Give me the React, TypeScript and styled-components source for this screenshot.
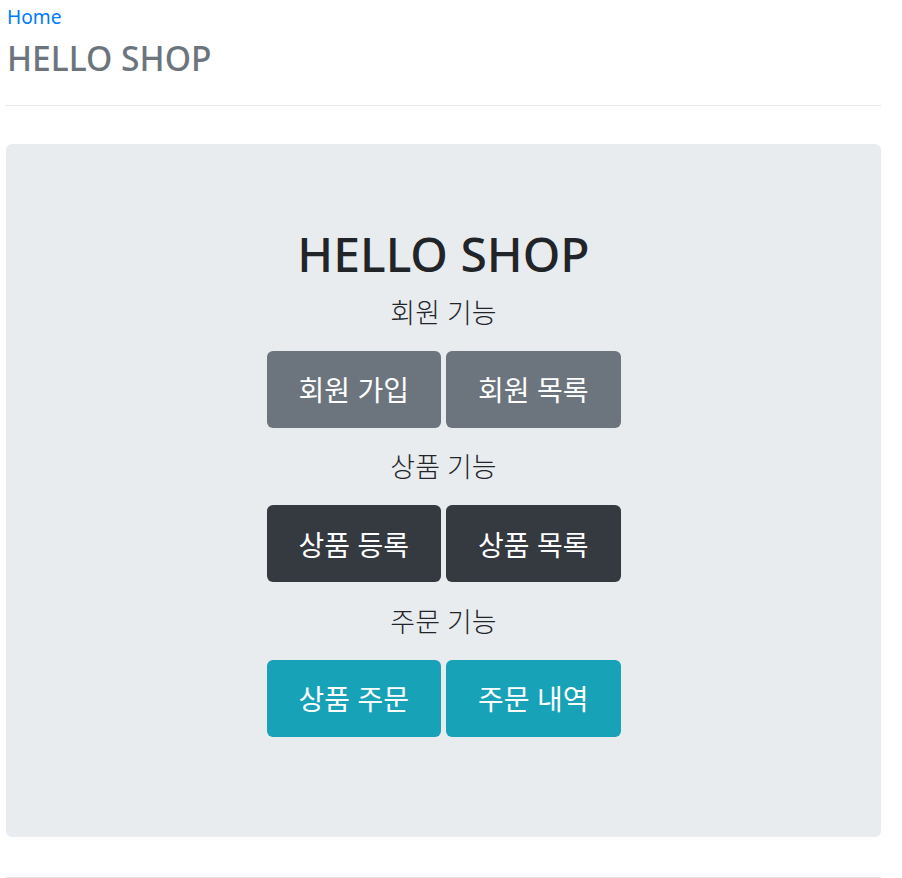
import React from "react";
import styled, { createGlobalStyle } from "styled-components";

const GlobalStyle = createGlobalStyle`
  html, body {
    margin: 0;
    padding: 0;
    background: #ffffff;
  }
  body {
    font-family: "Noto Sans", "Noto Sans CJK KR", sans-serif;
    color: #212529;
  }
`;

const Container = styled.div`
  width: 875px;
  margin-left: 6px;
  padding-top: 3px;
  display: flex;
  flex-direction: column;
`;

const Header = styled.header`
  display: flex;
  flex-direction: column;
  align-items: flex-start;
  padding-left: 1px;
`;

const HomeLink = styled.a`
  font-size: 19.2px;
  line-height: 28.8px;
  color: #007bff;
  text-decoration: none;
`;

const SiteTitle = styled.h3`
  margin: 6px 0 0 0;
  font-size: 33.6px;
  line-height: 40.3px;
  font-weight: 500;
  color: #6c757d;
`;

const Rule = styled.hr<{ $top: number }>`
  margin: ${(p) => p.$top}px 0 0 0;
  border: 0;
  border-top: 1px solid #e6e6e6;
  height: 0;
`;

const Jumbotron = styled.section`
  margin-top: 38px;
  background: #e9ecef;
  border-radius: 6px;
  padding: 81px 20px 78.5px;
  display: flex;
  flex-direction: column;
  align-items: center;
`;

const MainTitle = styled.h1`
  margin: 0 0 12px 0;
  font-size: 48px;
  line-height: 57.6px;
  font-weight: 500;
  color: #212529;
`;

const Lead = styled.p`
  margin: 0 0 20px 0;
  font-size: 27px;
  line-height: 36px;
  font-weight: 300;
  color: #212529;
`;

const ButtonRow = styled.div`
  display: flex;
  gap: 5px;
  margin-bottom: 21.5px;
`;

const palette = {
  secondary: "#6c757d",
  dark: "#343a40",
  info: "#17a2b8",
};

const Button = styled.a<{ $variant: keyof typeof palette }>`
  width: 174.5px;
  height: 77px;
  box-sizing: border-box;
  display: flex;
  align-items: center;
  justify-content: center;
  border-radius: 6px;
  background: ${(p) => palette[p.$variant]};
  color: #ffffff;
  font-size: 28px;
  font-weight: 400;
  text-decoration: none;
`;

const sections: {
  title: string;
  variant: keyof typeof palette;
  buttons: string[];
}[] = [
  { title: "회원 기능", variant: "secondary", buttons: ["회원 가입", "회원 목록"] },
  { title: "상품 기능", variant: "dark", buttons: ["상품 등록", "상품 목록"] },
  { title: "주문 기능", variant: "info", buttons: ["상품 주문", "주문 내역"] },
];

export default function App() {
  return (
    <>
      <GlobalStyle />
      <Container>
        <Header>
          <HomeLink href="#">Home</HomeLink>
          <SiteTitle>HELLO SHOP</SiteTitle>
        </Header>
        <Rule $top={27} />
        <Jumbotron>
          <MainTitle>HELLO SHOP</MainTitle>
          {sections.map((s) => (
            <React.Fragment key={s.title}>
              <Lead>{s.title}</Lead>
              <ButtonRow>
                {s.buttons.map((b) => (
                  <Button key={b} href="#" $variant={s.variant}>
                    {b}
                  </Button>
                ))}
              </ButtonRow>
            </React.Fragment>
          ))}
        </Jumbotron>
        <Rule $top={40} />
      </Container>
    </>
  );
}
